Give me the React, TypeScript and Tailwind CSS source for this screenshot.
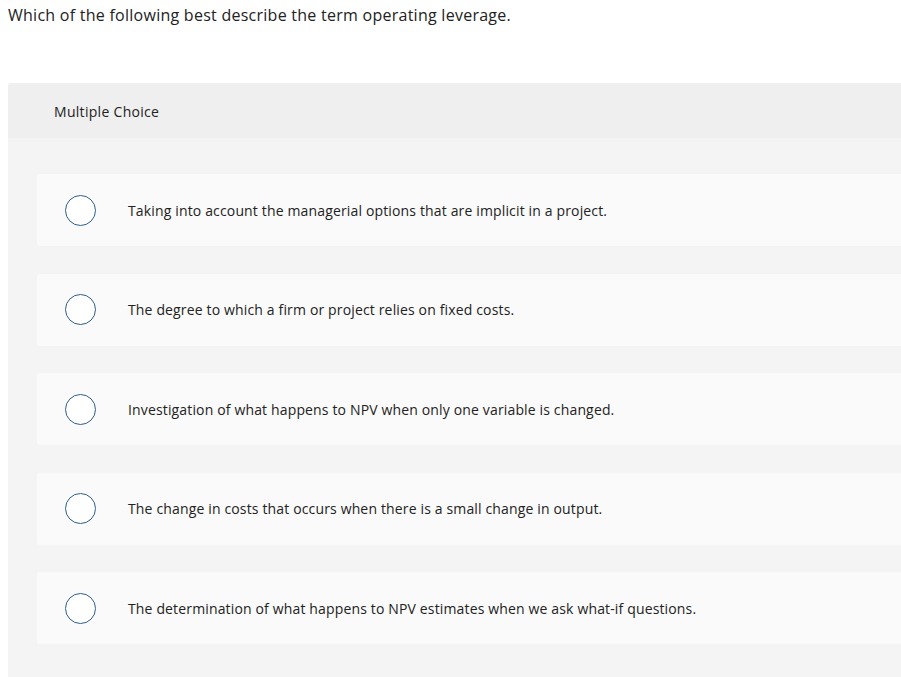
import React from 'react';

const OPTIONS = [
  'Taking into account the managerial options that are implicit in a project.',
  'The degree to which a firm or project relies on fixed costs.',
  'Investigation of what happens to NPV when only one variable is changed.',
  'The change in costs that occurs when there is a small change in output.',
  'The determination of what happens to NPV estimates when we ask what-if questions.',
];

export default function App() {
  return (
    <div className="w-[901px] h-[677px] overflow-hidden bg-white text-[#1a1a1a]" style={{ fontFamily: '"Open Sans", "Liberation Sans", sans-serif' }}>
      <p className="pl-2 pt-[5px] text-[16px] leading-5 tracking-[0.26px] text-[#222]">
        Which of the following best describe the term operating leverage.
      </p>

      <div className="ml-2 mt-[58px] w-[920px] rounded-tl-[3px] bg-[#f4f4f4]">
        <div className="flex h-[55px] items-center rounded-tl-[3px] bg-[#efefef] pl-[46px]">
          <span className="pt-[1px] text-[14px] tracking-[0.3px] text-[#222]">Multiple Choice</span>
        </div>

        <div className="flex flex-col gap-[27.5px] pl-[29px] pt-[36px] pb-[40px]">
          {OPTIONS.map((opt) => (
            <div key={opt} className="flex h-[72px] items-center rounded-[3px] bg-[#fafafa]">
              <span className="ml-[28px] h-[31px] w-[31px] shrink-0 rounded-full border-[1.5px] border-[#2e5e8e] bg-white" />
              <span className="ml-[32px] text-[14px] tracking-[0.15px] text-[#222]">{opt}</span>
            </div>
          ))}
        </div>
      </div>
    </div>
  );
}
